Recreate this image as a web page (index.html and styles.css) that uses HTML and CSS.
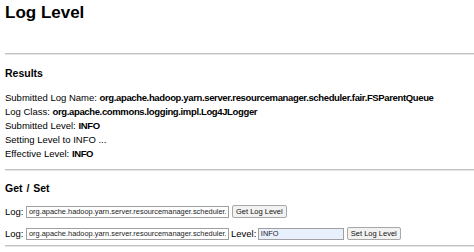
FILE: index.html
```html
<!DOCTYPE html>
<html lang="en">
<head>
  <meta charset="UTF-8" />
  <title>Log Level</title>
  <link rel="stylesheet" href="styles.css">
</head>
<body>
  <h1>Log Level</h1>
  <hr>
  <h3>Results</h3>
  <p class="results">
    Submitted Log Name: <b>org.apache.hadoop.yarn.server.resourcemanager.scheduler.fair.FSParentQueue</b><br>
    Log Class: <b>org.apache.commons.logging.impl.Log4JLogger</b><br>
    Submitted Level: <b>INFO</b><br>
    Setting Level to INFO ...<br>
    Effective Level: <b>INFO</b>
  </p>
  <hr>
  <h3 class="getset">Get / Set</h3>
  <form class="row">
    <span class="label">Log:</span>
    <input type="text" class="log" value="org.apache.hadoop.yarn.server.resourcemanager.scheduler.fair.FSParentQueue">
    <input type="submit" value="Get Log Level">
  </form>
  <form class="row">
    <span class="label">Log:</span>
    <input type="text" class="log" value="org.apache.hadoop.yarn.server.resourcemanager.scheduler.fair.FSParentQueue">
    <span class="label level-label">Level:</span>
    <input type="text" class="level" value="INFO">
    <input type="submit" value="Set Log Level">
  </form>
  <hr class="last">
</body>
</html>
```

FILE: styles.css
```css
body { font-family: "Liberation Sans", Arial, sans-serif; font-size: 9.5px; margin: 0 0 0 5px; color: #000; background: #fff; }
h1 { font-size: 17px; line-height: 20px; margin: 3px 0 30px; }
h3 { font-size: 10.5px; line-height: 12px; margin: 12px 0 12px; }
hr { border: none; border-top: 1px solid #c4c4c4; border-bottom: 1px solid #e6e6e6; margin: 0; height: 0; }
.results { line-height: 14px; margin: 0 0 8px; white-space: nowrap; }
.results b { letter-spacing: -0.36px; }
.getset { margin: 11px 0 11px; word-spacing: 1px; }
.row { margin: 0 0 9px; display: flex; align-items: center; height: 13px; }
.label { margin-right: 2.5px; }
.level-label { margin-left: 2px; margin-right: 1.5px; }
input[type="text"] {
  font-family: "Liberation Sans", Arial, sans-serif;
  font-size: 7.4px;
  height: 12px;
  box-sizing: border-box;
  border: 1px solid #a0a0a0;
  padding: 0 2px;
  margin: 0;
  color: #222;
}
.log { width: 203px; }
.level { width: 86px; background: #e8f0fe; }
input[type="submit"] {
  font-family: "Liberation Sans", Arial, sans-serif;
  font-size: 7.5px;
  height: 13px;
  padding: 0 3px;
  border: 1px solid #a8a8a8;
  background: #f2f2f2;
  color: #111;
  border-radius: 2px;
  margin: 0 0 0 3px;
}
.last { margin-top: -4px; }
```
